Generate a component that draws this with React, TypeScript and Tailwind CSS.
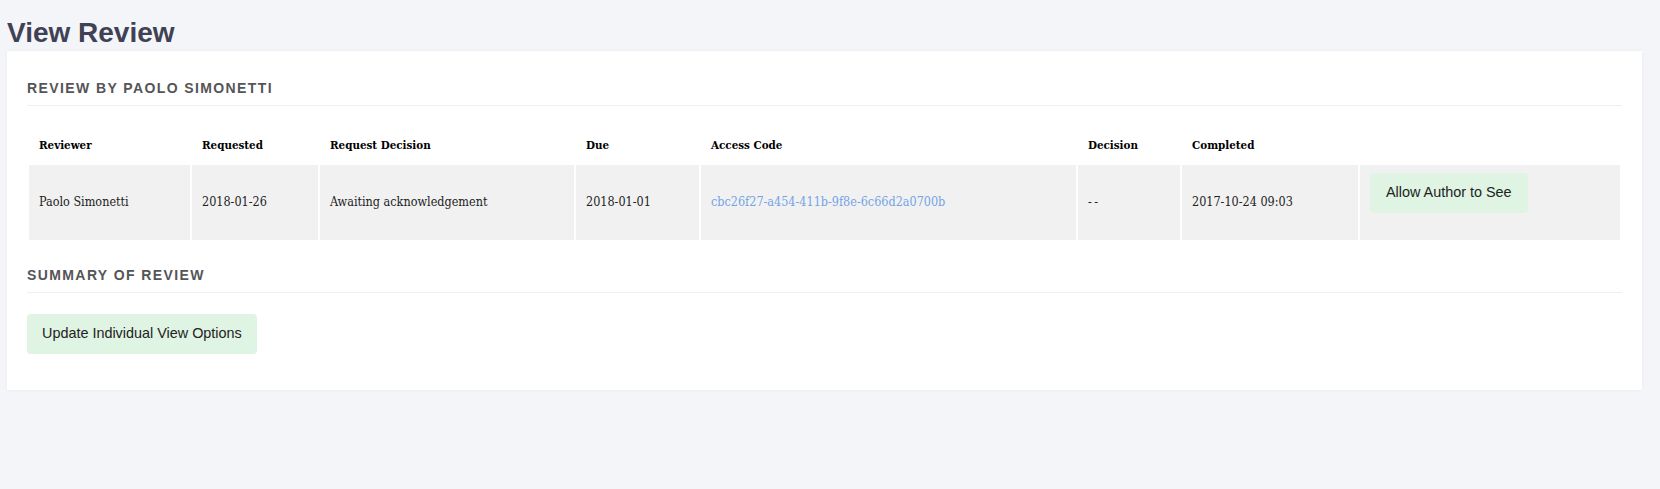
import React from "react";

const serif = "font-['DejaVu_Serif_Condensed','DejaVu_Serif',serif]";

export default function App() {
  const cols = [161, 126, 254, 123, 375, 102, 176, 260];
  const td = "bg-[#f1f1f1] px-[10px] align-middle";
  return (
    <div className="min-h-screen bg-[#f4f5f9] pl-[7px] pr-[18px] pt-[17px] font-['Liberation_Sans',Arial,sans-serif]">
      <h1 className="text-[28px] font-bold leading-[32px] text-[#3f4254] mb-[2px]">View Review</h1>
      <div className="bg-white px-[20px] pt-[27px] pb-[36px] shadow-[0_0_4px_rgba(0,0,0,0.04)]">
        <h2 className="text-[14px] font-bold leading-[20px] tracking-[1.4px] text-[#555558] uppercase pb-[7px] border-b border-[#efefef]">
          Review by Paolo Simonetti
        </h2>
        <table className={`mt-[21px] w-full table-fixed border-separate border-spacing-[2px] text-[12.5px] text-[#222] ${serif}`}>
          <colgroup>
            {cols.map((w, i) => (
              <col key={i} style={{ width: w }} />
            ))}
          </colgroup>
          <thead>
            <tr>
              {["Reviewer", "Requested", "Request Decision", "Due", "Access Code", "Decision", "Completed", ""].map((h, i) => (
                <th key={i} className="h-[34px] px-[10px] text-left align-middle text-[11.5px] font-bold text-black">
                  {h}
                </th>
              ))}
            </tr>
          </thead>
          <tbody>
            <tr>
              <td className={`h-[75px] ${td}`}>Paolo Simonetti</td>
              <td className={td}>2018-01-26</td>
              <td className={td}>Awaiting acknowledgement</td>
              <td className={td}>2018-01-01</td>
              <td className={td}>
                <a className="text-[#74a3e6]">cbc26f27-a454-411b-9f8e-6c66d2a0700b</a>
              </td>
              <td className={`${td} tracking-[2.5px]`}>--</td>
              <td className={td}>2017-10-24 09:03</td>
              <td className="bg-[#f1f1f1] px-[10px] pt-[8px] align-top">
                <button className="h-[40px] rounded-[4px] bg-[#dff4e3] px-[16px] text-[14.4px] text-[#222] font-['Liberation_Sans',Arial,sans-serif]">
                  Allow Author to See
                </button>
              </td>
            </tr>
          </tbody>
        </table>
        <h2 className="mt-[23px] text-[14px] font-bold leading-[20px] tracking-[1.4px] text-[#555558] uppercase pb-[7px] border-b border-[#efefef]">
          Summary of Review
        </h2>
        <button className="mt-[21px] h-[40px] rounded-[4px] bg-[#dff4e3] px-[15px] text-[14.4px] text-[#222]">
          Update Individual View Options
        </button>
      </div>
    </div>
  );
}
